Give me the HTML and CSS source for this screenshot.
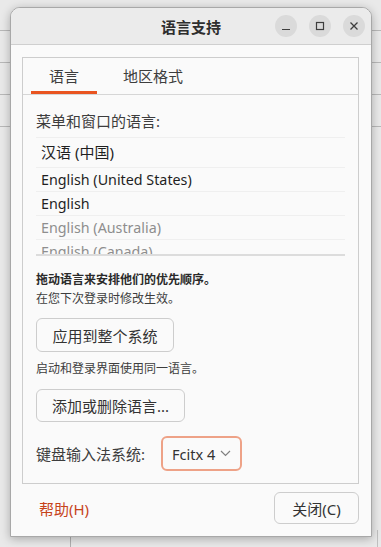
FILE: index.html
```html
<!DOCTYPE html>
<html lang="zh-CN">
<head>
    <meta charset="UTF-8"/>
    <title>语言支持</title>
    <link rel="stylesheet" href="styles.css">
</head>
<body>
    <div class="window">
        <header class="titlebar">
            <span></span>
            <h1 class="title">语言支持</h1>
            <div class="wm-buttons">
                <button class="wm-button" aria-label="最小化">
                    <svg width="10" height="10" viewBox="0 0 10 10"><path d="M1 8.5h8" stroke="#3d3d3d" stroke-width="1.2"/></svg>
                </button>
                <button class="wm-button" aria-label="最大化">
                    <svg width="10" height="10" viewBox="0 0 10 10"><rect x="1.5" y="1.5" width="7" height="7" fill="none" stroke="#3d3d3d" stroke-width="1.2"/></svg>
                </button>
                <button class="wm-button" aria-label="关闭">
                    <svg width="10" height="10" viewBox="0 0 10 10"><path d="M1.5 1.5l7 7M8.5 1.5l-7 7" stroke="#3d3d3d" stroke-width="1.3"/></svg>
                </button>
            </div>
        </header>

        <div class="content">
            <section class="notebook">
                <nav class="tabs">
                    <span class="tab tab-active">语言</span>
                    <span class="tab">地区格式</span>
                </nav>
                <div class="page">
                    <div class="label">菜单和窗口的语言:</div>
                    <ul class="lang-list">
                        <li class="lang lang-cjk">汉语 (中国)</li>
                        <li class="lang">English (United States)</li>
                        <li class="lang">English</li>
                        <li class="lang lang-off">English (Australia)</li>
                        <li class="lang lang-off">English (Canada)</li>
                    </ul>
                    <p class="hint"><b>拖动语言来安排他们的优先顺序。</b><br>在您下次登录时修改生效。</p>
                    <button class="btn btn-apply">应用到整个系统</button>
                    <p class="hint hint-login">启动和登录界面使用同一语言。</p>
                    <button class="btn btn-add">添加或删除语言...</button>
                    <div class="im-row">
                        <span class="label">键盘输入法系统:</span>
                        <div class="combo">
                            <span>Fcitx 4</span>
                            <svg width="11" height="7" viewBox="0 0 11 7"><path d="M1 1l4.5 4.5L10 1" fill="none" stroke="#808080" stroke-width="1.2"/></svg>
                        </div>
                    </div>
                </div>
            </section>

            <footer class="actions">
                <a class="help">帮助(H)</a>
                <button class="btn btn-close">关闭(C)</button>
            </footer>
        </div>
    </div>
</body>
</html>
```

FILE: styles.css
```css
/**/
html, body {
    margin: 0;
    height: 100%;
}

body {
    width: 381px;
    height: 547px;
    overflow: hidden;
    font-family: 'Noto Sans', 'Noto Sans CJK SC', sans-serif;
    color: #2e2e2e;
    background-color: #e9e9e9;
    background-image:
        linear-gradient(#b8b8b8, #b8b8b8),
        linear-gradient(#b8b8b8, #b8b8b8),
        linear-gradient(#b8b8b8, #b8b8b8),
        linear-gradient(#b8b8b8, #b8b8b8),
        linear-gradient(#b0b0b0, #b0b0b0),
        linear-gradient(#c0c0c0, #c0c0c0);
    background-size: 100% 1px, 100% 1px, 100% 1px, 100% 1px, 1px 20px, 1px 20px;
    background-position: 0 30px, 0 62px, 0 94px, 0 126px, 70px 537px, 377px 530px;
    background-repeat: no-repeat;
}

.window {
    box-sizing: border-box;
    width: 362px;
    height: 530px;
    margin: 7px 0 0 10px;
    border: 1px solid #a8a8a8;
    border-radius: 10px 10px 0 0;
    background-color: #fafafa;
    box-shadow: 0 2px 10px rgba(0, 0, 0, .28);
    display: flex;
    flex-direction: column;
    overflow: hidden;
}

.titlebar {
    height: 36px;
    flex: none;
    display: grid;
    grid-template-columns: 1fr auto 1fr;
    align-items: center;
    background-color: #ebebeb;
    border-bottom: 1px solid #cfcfcf;
}

.title {
    margin: 0;
    font-size: 15px;
    font-weight: bold;
    color: #2e2e2e;
}

.wm-buttons {
    justify-self: end;
    display: flex;
    gap: 12px;
    padding-right: 6px;
}

.wm-button {
    width: 22px;
    height: 22px;
    padding: 0;
    border: none;
    border-radius: 50%;
    background-color: #dadada;
    display: flex;
    align-items: center;
    justify-content: center;
}

.content {
    flex: 1;
    display: flex;
    flex-direction: column;
    padding: 12px 12px 0 11px;
}

.notebook {
    box-sizing: border-box;
    height: 427px;
    border: 1px solid #cdcdcd;
    display: flex;
    flex-direction: column;
}

.tabs {
    height: 36px;
    flex: none;
    display: flex;
    padding-left: 8px;
    border-bottom: 1px solid #d6d6d6;
}

.tab {
    box-sizing: border-box;
    padding: 1px 19px 0 19px;
    display: flex;
    align-items: center;
    white-space: nowrap;
    font-size: 15px;
    color: #3d3d3d;
    border-bottom: 3px solid transparent;
}

.tab-active {
    width: 66px;
    padding-left: 0;
    padding-right: 0;
    justify-content: center;
    border-bottom-color: #e95420;
    margin-right: 7px;
}

.page {
    flex: 1;
    padding: 16px 13px 0 13px;
    display: flex;
    flex-direction: column;
    align-items: flex-start;
}

.label {
    font-size: 15px;
    line-height: 20px;
    color: #3d3d3d;
}

.lang-list {
    align-self: stretch;
    list-style: none;
    margin: 6px 0 0 0;
    padding: 0;
    height: 117px;
    overflow: hidden;
    border-bottom: 2px solid #dcdcdc;
}

.lang {
    box-sizing: border-box;
    height: 24px;
    line-height: 23px;
    padding-left: 5px;
    font-size: 14.3px;
    color: #1f1f1f;
    border-top: 1px solid #efefef;
}

.lang-cjk {
    height: 30px;
    line-height: 29px;
    font-size: 15px;
}

.lang-off {
    color: #8e8e8e;
}

.hint {
    margin: 14px 0 0 0;
    font-size: 12px;
    line-height: 19px;
    color: #3d3d3d;
}

.hint b {
    color: #2a2a2a;
}

.hint-login {
    margin-top: 7px;
}

.btn {
    box-sizing: border-box;
    font: inherit;
    font-size: 15px;
    color: #333;
    background-color: #fafafa;
    border: 1px solid #cdcdcd;
    border-radius: 6px;
    padding: 0;
}

.btn-apply {
    width: 138px;
    height: 34px;
    margin-top: 10px;
}

.btn-add {
    width: 149px;
    height: 33px;
    margin-top: 11px;
}

.im-row {
    margin-top: 14px;
    display: flex;
    align-items: center;
    gap: 16px;
}

.combo {
    box-sizing: border-box;
    width: 81px;
    height: 35px;
    border: 2px solid #eea287;
    border-radius: 6px;
    display: flex;
    align-items: center;
    justify-content: space-between;
    padding: 0 9px 0 9px;
    font-size: 14.5px;
    color: #333;
}

.actions {
    display: flex;
    justify-content: space-between;
    align-items: center;
    padding: 8px 0 0 0;
}

.help {
    margin-left: 17px;
    font-size: 15px;
    color: #c7431a;
}

.btn-close {
    width: 85px;
    height: 32px;
}
```
